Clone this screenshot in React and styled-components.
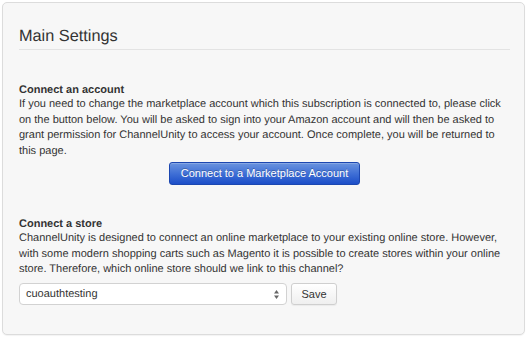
import React from "react";
import styled, { createGlobalStyle } from "styled-components";

const Global = createGlobalStyle`
  html, body { margin: 0; padding: 0; background: #ffffff; }
  body { font-family: "Liberation Sans", Arial, sans-serif; color: #333; text-rendering: geometricPrecision; }
  * { box-sizing: border-box; }
`;

const Panel = styled.div`
  margin: 2px;
  width: 523px;
  height: 333px;
  background: #f7f7f7;
  border: 1px solid #dcdcdc;
  border-radius: 5px;
  box-shadow: 0 1px 1px rgba(0,0,0,0.05);
  padding: 17px 14px 0 16px;
`;

const Title = styled.h1`
  margin: 0;
  font-size: 16.3px;
  font-weight: normal;
  line-height: 20px;
  color: #333;
  padding: 6px 0 3px 0;
  border-bottom: 1px solid #e3e3e3;
`;

const Section = styled.section`
  margin-top: ${(p) => p.$top}px;
`;

const Heading = styled.h2`
  margin: 0;
  font-size: 11px;
  font-weight: bold;
  line-height: 14px;
  color: #333;
`;

const Text = styled.p`
  margin: 0;
  font-size: 11px;
  line-height: 15.7px;
  color: #333;
  white-space: nowrap;
`;

const Center = styled.div`
  display: flex;
  justify-content: center;
  margin-top: 2px;
`;

const PrimaryButton = styled.button`
  width: 191px;
  height: 23px;
  border: 1px solid #1c47b0;
  border-radius: 3px;
  background: linear-gradient(to bottom, #6a93de 0%, #4070d6 50%, #1c4ec8 100%);
  color: #fff;
  font-family: "Liberation Sans", Arial, sans-serif;
  font-size: 11px;
  padding: 0;
  text-shadow: 0 -1px 0 rgba(0,0,0,0.25);
  box-shadow: inset 0 1px 0 rgba(255,255,255,0.2);
`;

const FormRow = styled.div`
  display: flex;
  gap: 4px;
  margin-top: 5px;
`;

const SelectBox = styled.div`
  position: relative;
  width: 268px;
  height: 22px;
  background: #fff;
  border: 1px solid #d2d2d2;
  border-radius: 4px;
  font-size: 11px;
  line-height: 20px;
  padding-left: 6px;
  color: #333;
`;

const Arrows = styled.svg`
  position: absolute;
  right: 7px;
  top: 6px;
`;

const Button = styled.button`
  width: 46px;
  height: 22px;
  border: 1px solid #cfcfcf;
  border-radius: 3px;
  background: linear-gradient(to bottom, #ffffff 0%, #efefef 100%);
  color: #333;
  font-family: "Liberation Sans", Arial, sans-serif;
  font-size: 11px;
  padding: 0;
  box-shadow: 0 1px 1px rgba(0,0,0,0.05);
`;

export default function App() {
  return (
    <>
      <Global />
      <Panel>
        <Title>Main Settings</Title>
        <Section $top={33}>
          <Heading>Connect an account</Heading>
          <Text>
            If you need to change the marketplace account which this subscription is connected to, please click
            <br />
            on the button below. You will be asked to sign into your Amazon account and will then be asked to
            <br />
            grant permission for ChannelUnity to access your account. Once complete, you will be returned to
            <br />
            this page.
          </Text>
          <Center>
            <PrimaryButton>Connect to a Marketplace Account</PrimaryButton>
          </Center>
        </Section>
        <Section $top={32}>
          <Heading>Connect a store</Heading>
          <Text>
            ChannelUnity is designed to connect an online marketplace to your existing online store. However,
            <br />
            with some modern shopping carts such as Magento it is possible to create stores within your online
            <br />
            store. Therefore, which online store should we link to this channel?
          </Text>
          <FormRow>
            <SelectBox>
              cuoauthtesting
              <Arrows width="5" height="9" viewBox="0 0 5 9">
                <path d="M2.5 0 L5 3.5 L0 3.5 Z" fill="#666" />
                <path d="M0 5.5 L5 5.5 L2.5 9 Z" fill="#666" />
              </Arrows>
            </SelectBox>
            <Button>Save</Button>
          </FormRow>
        </Section>
      </Panel>
    </>
  );
}
